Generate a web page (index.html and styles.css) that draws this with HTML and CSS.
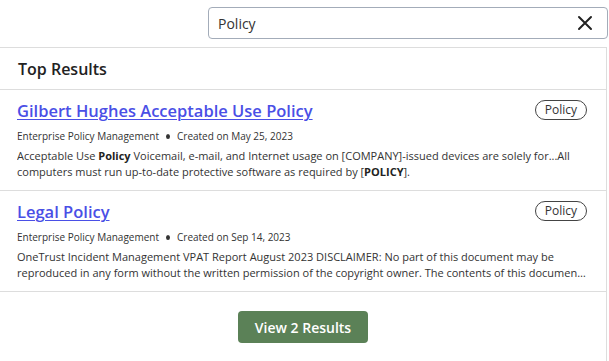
FILE: index.html
```html
<!DOCTYPE html>
<html>
<head>
<meta charset="utf-8">
<link rel="stylesheet" href="styles.css">
</head>
<body>
<div class="top">
  <div class="search">
    <span class="query">Policy</span>
    <svg class="clear" width="16" height="16" viewBox="0 0 16 16"><path d="M2 2 L14 14 M14 2 L2 14" stroke="#222" stroke-width="2" fill="none" stroke-linecap="round"/></svg>
  </div>
</div>
<div class="panel">
  <div class="heading">Top Results</div>
  <div class="result">
    <div class="row">
      <a class="title" href="#">Gilbert Hughes Acceptable Use Policy</a>
      <span class="tag">Policy</span>
    </div>
    <div class="meta">Enterprise Policy Management <span class="dot"></span> Created on May 25, 2023</div>
    <div class="snippet">Acceptable Use <b>Policy</b> Voicemail, e-mail, and Internet usage on [COMPANY]-issued devices are solely for...All computers must run up-to-date protective software as required by [<b>POLICY</b>].</div>
  </div>
  <div class="result">
    <div class="row">
      <a class="title" href="#">Legal Policy</a>
      <span class="tag">Policy</span>
    </div>
    <div class="meta">Enterprise Policy Management <span class="dot"></span> Created on Sep 14, 2023</div>
    <div class="snippet">OneTrust Incident Management VPAT Report August 2023 DISCLAIMER: No part of this document may be reproduced in any form without the written permission of the copyright owner. The contents of this document are subject to revision without notice due to continued progress in methodology, design and manufacturing.</div>
  </div>
  <div class="footer">
    <button class="view">View 2 Results</button>
  </div>
</div>
</body>
</html>
```
FILE: styles.css
```css
html, body {
  margin: 0;
  padding: 0;
  background: #fff;
  font-family: "Open Sans", "Noto Sans", sans-serif;
  color: #333;
}
.top {
  height: 47px;
  display: flex;
  align-items: flex-start;
  padding-top: 7px;
  padding-left: 208px;
  box-sizing: border-box;
}
.search {
  width: 400px;
  height: 32px;
  box-sizing: border-box;
  border: 1px solid #a3acb9;
  border-radius: 4px;
  display: flex;
  align-items: center;
  justify-content: space-between;
  padding: 0 14px 0 9px;
}
.query {
  font-size: 14px;
  color: #333;
}
.clear { display: block; }
.panel {
  width: 607px;
  box-sizing: border-box;
  border-top: 1px solid #ddd;
  border-right: 1px solid #ddd;
  height: 314px;
}
.heading {
  height: 42px;
  box-sizing: border-box;
  border-bottom: 1px solid #ddd;
  padding-left: 18px;
  padding-top: 1px;
  display: flex;
  align-items: center;
  font-size: 16px;
  font-weight: 600;
  color: #222;
}
.result {
  height: 101px;
  box-sizing: border-box;
  border-bottom: 1px solid #ddd;
  padding: 10px 0 0 17px;
}
.row {
  display: flex;
  justify-content: space-between;
  align-items: flex-start;
  padding-right: 19px;
}
.title {
  font-size: 16.5px;
  font-weight: 600;
  color: #4a4fe6;
  line-height: 22px;
  text-decoration: underline;
  text-decoration-thickness: 1px;
  text-underline-offset: 2px;
}
.tag {
  font-size: 12px;
  line-height: 18px;
  padding: 0 9px;
  border: 1px solid #444;
  border-radius: 10px;
  color: #333;
}
.meta {
  font-size: 10px;
  line-height: 14px;
  margin-top: 7px;
  display: flex;
  align-items: center;
  gap: 7px;
  color: #333;
}
.dot {
  width: 4px;
  height: 5px;
  border-radius: 50%;
  background: #333;
  display: inline-block;
}
.snippet {
  width: 570px;
  font-size: 11px;
  line-height: 16px;
  margin-top: 5px;
  display: -webkit-box;
  -webkit-line-clamp: 2;
  -webkit-box-orient: vertical;
  overflow: hidden;
}
.snippet b { font-weight: 700; color: #222; }
.footer {
  display: flex;
  justify-content: center;
  padding-top: 19px;
}
.view {
  background: #5b8157;
  color: #fff;
  border: none;
  border-radius: 4px;
  width: 130px;
  height: 32px;
  font-family: "Open Sans", sans-serif;
  font-size: 14px;
  font-weight: 600;
  padding: 0;
}
```
